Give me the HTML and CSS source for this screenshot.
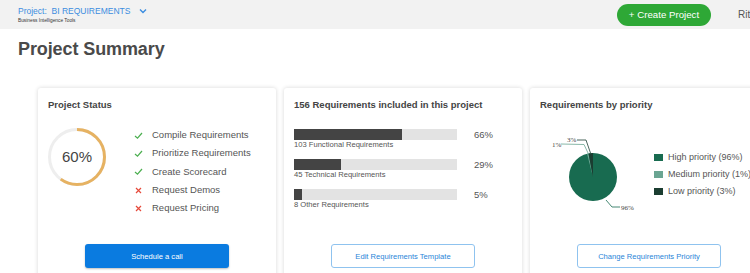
FILE: index.html
```html
<!DOCTYPE html>
<html>
<head>
    <title>Project Summary</title>
    <link rel="stylesheet" href="styles.css">
</head>
<body>
    <div class="top-bar">
        <div class="project-picker">
            <div class="project-name">
                Project:&nbsp; BI REQUIREMENTS
                <svg class="chevron" width="8" height="6" viewBox="0 0 8 6"><polyline points="1,1.5 4,4.5 7,1.5" fill="none" stroke="#3b8de0" stroke-width="1.4"/></svg>
            </div>
            <div class="project-sub">Business Intelligence Tools</div>
        </div>
        <button class="create-button">+ Create Project</button>
        <div class="user-name">Rita</div>
    </div>

    <h1 class="page-title">Project Summary</h1>

    <div class="cards">
        <div class="card">
            <div class="card-title">Project Status</div>
            <div class="status-body">
                <svg class="ring" width="60" height="60" viewBox="0 0 60 60">
                    <circle cx="30" cy="30" r="27.5" fill="none" stroke="#eeeeee" stroke-width="3"/>
                    <circle cx="30" cy="30" r="27.5" fill="none" stroke="#e6b262" stroke-width="3"
                        stroke-dasharray="103.67 172.79" transform="rotate(-90 30 30)"/>
                    <text x="30" y="35" text-anchor="middle" class="ring-text">60%</text>
                </svg>
                <ul class="checklist">
                    <li><svg class="mark" width="9" height="9" viewBox="0 0 9 9"><polyline points="1,5 3.5,7.2 8,2" fill="none" stroke="#4caf50" stroke-width="1.2"/></svg>Compile Requirements</li>
                    <li><svg class="mark" width="9" height="9" viewBox="0 0 9 9"><polyline points="1,5 3.5,7.2 8,2" fill="none" stroke="#4caf50" stroke-width="1.2"/></svg>Prioritize Requirements</li>
                    <li><svg class="mark" width="9" height="9" viewBox="0 0 9 9"><polyline points="1,5 3.5,7.2 8,2" fill="none" stroke="#4caf50" stroke-width="1.2"/></svg>Create Scorecard</li>
                    <li><svg class="mark" width="9" height="9" viewBox="0 0 9 9"><path d="M2 2 L7 7 M7 2 L2 7" stroke="#e64a3b" stroke-width="1.2"/></svg>Request Demos</li>
                    <li><svg class="mark" width="9" height="9" viewBox="0 0 9 9"><path d="M2 2 L7 7 M7 2 L2 7" stroke="#e64a3b" stroke-width="1.2"/></svg>Request Pricing</li>
                </ul>
            </div>
            <button class="button-primary">Schedule a call</button>
        </div>

        <div class="card">
            <div class="card-title">156 Requirements included in this project</div>
            <div class="req-list">
                <div class="req-row">
                    <div class="req-left">
                        <div class="bar"><div class="bar-fill" style="width: 66%"></div></div>
                        <div class="req-label">103 Functional Requirements</div>
                    </div>
                    <div class="req-pct">66%</div>
                </div>
                <div class="req-row">
                    <div class="req-left">
                        <div class="bar"><div class="bar-fill" style="width: 29%"></div></div>
                        <div class="req-label">45 Technical Requirements</div>
                    </div>
                    <div class="req-pct">29%</div>
                </div>
                <div class="req-row">
                    <div class="req-left">
                        <div class="bar"><div class="bar-fill" style="width: 5%"></div></div>
                        <div class="req-label">8 Other Requirements</div>
                    </div>
                    <div class="req-pct">5%</div>
                </div>
            </div>
            <button class="button-outline">Edit Requirements Template</button>
        </div>

        <div class="card">
            <div class="card-title">Requirements by priority</div>
            <div class="priority-body">
                <svg class="pie" width="110" height="95" viewBox="0 0 110 95">
                    <circle cx="53" cy="50" r="24" fill="#186b50"/>
                    <path d="M53 50 L47.03 26.75 A24 24 0 0 1 48.50 26.43 Z" fill="#6aa592"/>
                    <path d="M53 50 L48.50 26.43 A24 24 0 0 1 53 26 Z" fill="#1b3d31"/>
                    <polyline points="37,13 46,13 50.5,26" fill="none" stroke="#1b3d31" stroke-width="0.8"/>
                    <polyline points="21,17 44,17.5 48.5,27" fill="none" stroke="#6aa592" stroke-width="0.8"/>
                    <polyline points="66,73 72,80 80,80" fill="none" stroke="#186b50" stroke-width="0.8"/>
                    <text x="27" y="14.5" class="pie-label">3%</text>
                    <text x="12" y="19.5" class="pie-label">1%</text>
                    <text x="81" y="82.5" class="pie-label">96%</text>
                </svg>
                <ul class="legend">
                    <li><span class="swatch swatch-high"></span>High priority (96%)</li>
                    <li><span class="swatch swatch-medium"></span>Medium priority (1%)</li>
                    <li><span class="swatch swatch-low"></span>Low priority (3%)</li>
                </ul>
            </div>
            <button class="button-outline">Change Requirements Priority</button>
        </div>
    </div>
</body>
</html>
```

FILE: styles.css
```css
body {
    margin: 0;
    font-family: "Liberation Sans", Arial, sans-serif;
    background: #ffffff;
    color: #555555;
    width: 750px;
    height: 273px;
    overflow: hidden;
}

.top-bar {
    height: 29px;
    background: #f2f2f2;
    display: flex;
    align-items: center;
    padding-left: 18px;
}

.project-picker {
    flex: 1;
    padding-top: 1px;
}

.project-name {
    color: #3b8de0;
    font-size: 8.5px;
    line-height: 12px;
    display: flex;
    align-items: center;
}

.chevron {
    margin-left: 9px;
}

.project-sub {
    font-size: 4.8px;
    line-height: 8px;
    color: #333333;
}

.create-button {
    width: 94px;
    height: 22px;
    border: none;
    border-radius: 11px;
    background: #2ea836;
    color: #ffffff;
    font-family: inherit;
    font-size: 9.7px;
    padding: 0;
    margin-right: 27px;
}

.user-name {
    font-size: 10px;
    color: #555555;
    white-space: nowrap;
    width: 12px;
}

.page-title {
    margin: 9px 0 0 18px;
    font-size: 18px;
    letter-spacing: -0.1px;
    line-height: 22px;
    color: #4a4a4a;
}

.cards {
    display: flex;
    gap: 8px;
    padding-left: 38px;
    margin-top: 28px;
}

.card {
    flex: none;
    width: 238px;
    height: 200px;
    box-sizing: border-box;
    padding: 10px 10px 20px 10px;
    background: #ffffff;
    border-radius: 3px;
    box-shadow: 0 0 4px rgba(0, 0, 0, 0.16);
    display: flex;
    flex-direction: column;
}

.card-title {
    font-size: 9.5px;
    line-height: 13px;
    font-weight: bold;
    color: #444444;
}

.status-body {
    display: flex;
    align-items: flex-start;
    margin-top: 15px;
}

.ring {
    margin-left: -1px;
    margin-top: 1px;
}

.ring-text {
    font-size: 15px;
    fill: #444444;
    font-family: "Liberation Sans", Arial, sans-serif;
}

.checklist {
    list-style: none;
    margin: 0 0 0 27px;
    padding: 0;
    font-size: 9.5px;
    line-height: 18.3px;
    color: #555555;
}

.checklist li {
    display: flex;
    align-items: center;
}

.mark {
    margin-right: 9px;
}

.button-primary,
.button-outline {
    margin-top: auto;
    align-self: center;
    width: 144px;
    height: 24px;
    border-radius: 3px;
    font-family: inherit;
    font-size: 7.6px;
    padding: 0;
}

.button-primary {
    border: none;
    background: #0a7be0;
    color: #ffffff;
    box-shadow: 0 1px 2px rgba(0, 0, 0, 0.25);
}

.button-outline {
    border: 1px solid #8fc3ef;
    background: #ffffff;
    color: #2a85d8;
}

.req-list {
    margin-top: 18px;
}

.req-row {
    display: flex;
    align-items: flex-start;
    margin-bottom: 9px;
}

.req-left {
    width: 163px;
}

.bar {
    height: 11px;
    background: #e3e3e3;
}

.bar-fill {
    height: 100%;
    background: #444444;
}

.req-label {
    font-size: 7.6px;
    line-height: 10px;
    color: #555555;
}

.req-pct {
    margin-left: 17px;
    font-size: 9.5px;
    line-height: 11px;
    color: #555555;
}

.priority-body {
    display: flex;
    align-items: flex-start;
    margin-top: 16px;
}

.pie {
    flex: none;
}

.pie-label {
    font-family: "Liberation Serif", serif;
    font-size: 7px;
    fill: #444444;
}

.legend {
    list-style: none;
    margin: 22px 0 0 4px;
    padding: 0;
    font-size: 9px;
    line-height: 17px;
    color: #555555;
    white-space: nowrap;
}

.legend li {
    display: flex;
    align-items: center;
}

.swatch {
    width: 9px;
    height: 7px;
    margin-right: 5px;
}

.swatch-high {
    background: #186b50;
}

.swatch-medium {
    background: #6aa592;
}

.swatch-low {
    background: #1b3d31;
}
```
